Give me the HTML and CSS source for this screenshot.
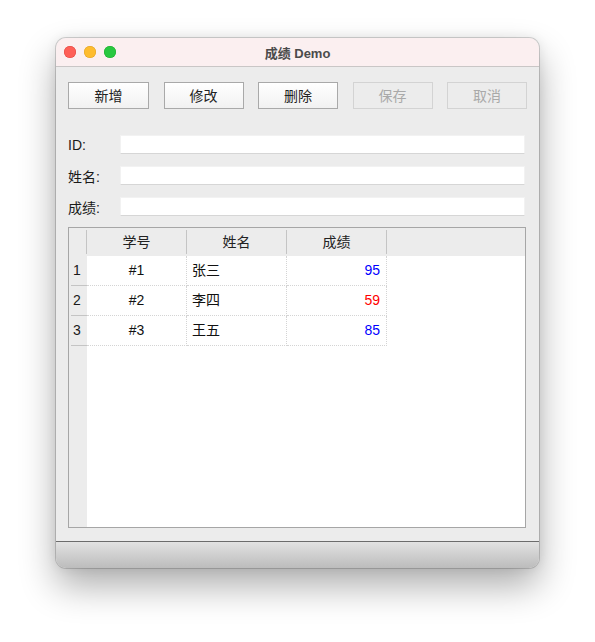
FILE: index.html
```html
<!DOCTYPE html>
<html lang="zh">
<head>
<meta charset="utf-8">
<title>成绩 Demo</title>
<link rel="stylesheet" href="styles.css">
</head>
<body>
<div class="window">
  <div class="titlebar">
    <div class="lights">
      <span class="light l-red"></span>
      <span class="light l-yellow"></span>
      <span class="light l-green"></span>
    </div>
    <div class="title">成绩 Demo</div>
  </div>
  <div class="content">
    <div class="toolbar">
      <button class="btn">新增</button>
      <button class="btn">修改</button>
      <button class="btn">删除</button>
      <button class="btn disabled">保存</button>
      <button class="btn disabled">取消</button>
    </div>
    <div class="form">
      <div class="row"><label class="lbl">ID:</label><div class="input"></div></div>
      <div class="row"><label class="lbl">姓名:</label><div class="input"></div></div>
      <div class="row"><label class="lbl">成绩:</label><div class="input"></div></div>
    </div>
    <div class="grid">
      <div class="rowheads">
        <div class="corner"></div>
        <div class="rh"><span>1</span></div>
        <div class="rh"><span>2</span></div>
        <div class="rh"><span>3</span></div>
      </div>
      <div class="main">
        <div class="hrow">
          <div class="hc">学号</div>
          <div class="hc">姓名</div>
          <div class="hc">成绩</div>
        </div>
        <div class="drow">
          <div class="dc center">#1</div>
          <div class="dc left">张三</div>
          <div class="dc right blue">95</div>
        </div>
        <div class="drow">
          <div class="dc center">#2</div>
          <div class="dc left">李四</div>
          <div class="dc right red">59</div>
        </div>
        <div class="drow">
          <div class="dc center">#3</div>
          <div class="dc left">王五</div>
          <div class="dc right blue">85</div>
        </div>
      </div>
    </div>
  </div>
  <div class="statusbar"></div>
</div>
</body>
</html>
```
FILE: styles.css
```css
* { box-sizing: border-box; }
html, body { margin: 0; padding: 0; }
body {
  background: #ffffff;
  width: 595px;
  height: 642px;
  padding: 38px 0 0 56px;
  font-family: "Liberation Sans", "Noto Sans CJK SC", sans-serif;
  color: #1a1a1a;
}
.window {
  width: 483px;
  height: 530px;
  border-radius: 10px;
  background: #ececec;
  display: flex;
  flex-direction: column;
  overflow: hidden;
  box-shadow: 0 0 0 1px rgba(0,0,0,0.16), 0 18px 36px rgba(0,0,0,0.32), 0 0 12px rgba(0,0,0,0.08);
}
.titlebar {
  height: 29px;
  flex: none;
  background: #fbeff0;
  border-bottom: 1px solid #c9c6c6;
  position: relative;
  display: flex;
  align-items: center;
}
.lights {
  display: flex;
  gap: 8px;
  padding-left: 8px;
  position: absolute;
  left: 0;
  top: 8px;
}
.light {
  width: 12px;
  height: 12px;
  border-radius: 50%;
  display: block;
}
.l-red { background: #fe5f57; box-shadow: inset 0 0 0 0.5px #e0443e; }
.l-yellow { background: #febc2e; box-shadow: inset 0 0 0 0.5px #dea123; }
.l-green { background: #28c840; box-shadow: inset 0 0 0 0.5px #1aab29; }
.title {
  width: 100%;
  text-align: center;
  font-size: 13px;
  font-weight: bold;
  color: #4b4b4b;
  padding-top: 1px;
}
.content {
  flex: 1;
  padding: 15px 12px 13px 12px;
  display: flex;
  flex-direction: column;
}
.toolbar {
  display: flex;
  justify-content: space-between;
  height: 27px;
}
.btn {
  width: 80px;
  height: 27px;
  border: 1px solid #a9a9a9;
  background: linear-gradient(#ffffff, #f1f1f1);
  font-family: "Liberation Sans", "Noto Sans CJK SC", sans-serif;
  font-size: 14px;
  color: #222;
  padding: 0 0 1px 0;
}
.btn:first-child { width: 81px; }
.btn.disabled {
  border-color: #d3d3d3;
  background: #ececec;
  color: #a9a9a9;
}
.form {
  margin-top: 26px;
  display: flex;
  flex-direction: column;
  gap: 12px;
  padding-right: 2px;
}
.row {
  display: flex;
  align-items: center;
  height: 19px;
}
.lbl {
  width: 52px;
  flex: none;
  font-size: 14px;
  color: #1a1a1a;
}
.input {
  flex: 1;
  height: 19px;
  background: #fff;
  border: 1px solid #f2f2f2;
  border-bottom-color: #d6d6d6;
}
.grid {
  margin-top: 11px;
  margin-right: 1px;
  height: 301px;
  border: 1px solid #a6a6a6;
  display: flex;
  background: #fff;
}
.rowheads {
  width: 18px;
  flex: none;
  background: #ececec;
  display: flex;
  flex-direction: column;
}
.corner {
  height: 28px;
  display: flex;
  align-items: center;
}
.corner::after {
  content: "";
  display: block;
  margin-left: auto;
  width: 1px;
  height: 24px;
  background: #c4c4c4;
}
.rh {
  height: 30px;
  padding-left: 2px;
}
.rh span {
  display: flex;
  align-items: center;
  height: 30px;
  padding-left: 2px;
  padding-bottom: 2px;
  font-size: 14px;
  color: #1a1a1a;
  border-bottom: 1px solid #c4c4c4;
}
.main {
  flex: 1;
  display: flex;
  flex-direction: column;
}
.hrow {
  height: 28px;
  background: #ececec;
  display: flex;
  align-items: center;
}
.hc {
  width: 100px;
  height: 24px;
  border-right: 1px solid #c4c4c4;
  text-align: center;
  font-size: 14px;
  line-height: 24px;
  color: #222;
}
.drow {
  display: flex;
  height: 30px;
}
.dc {
  width: 100px;
  height: 30px;
  border-right: 1px dotted #d4d4d4;
  border-bottom: 1px dotted #d4d4d4;
  font-size: 14px;
  line-height: 28px;
  color: #111;
}
.center { text-align: center; }
.left { padding-left: 5px; }
.right { text-align: right; padding-right: 6px; }
.blue { color: #0000ff; }
.red { color: #ff0000; }
.statusbar {
  flex: none;
  height: 27px;
  border-top: 1px solid #6c6c6c;
  background: linear-gradient(#e2e2e2, #bcbcbc);
}
```
